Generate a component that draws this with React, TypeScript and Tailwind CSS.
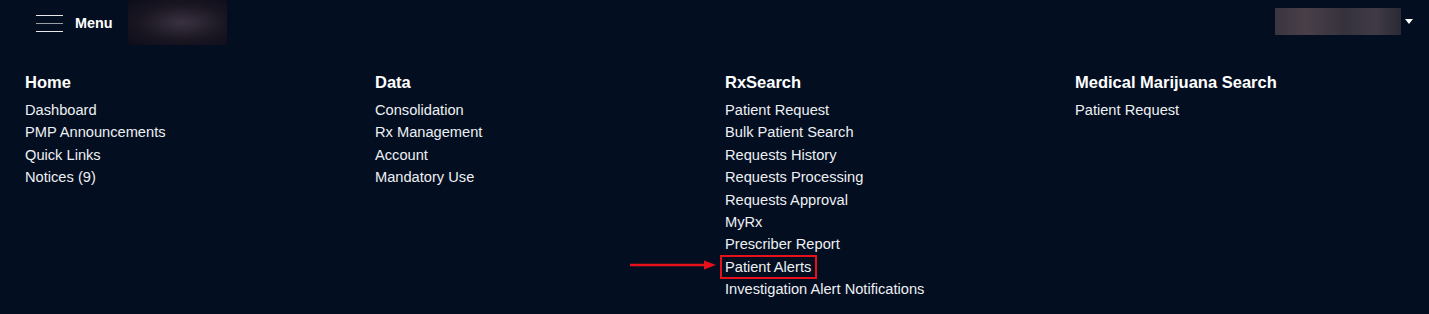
import React from 'react';

const columns: { title: string; links: string[] }[] = [
  { title: 'Home', links: ['Dashboard', 'PMP Announcements', 'Quick Links', 'Notices (9)'] },
  { title: 'Data', links: ['Consolidation', 'Rx Management', 'Account', 'Mandatory Use'] },
  {
    title: 'RxSearch',
    links: [
      'Patient Request',
      'Bulk Patient Search',
      'Requests History',
      'Requests Processing',
      'Requests Approval',
      'MyRx',
      'Prescriber Report',
      'Patient Alerts',
      'Investigation Alert Notifications',
    ],
  },
  { title: 'Medical Marijuana Search', links: ['Patient Request'] },
];

export default function App() {
  return (
    <div className="w-[1429px] h-[314px] overflow-hidden bg-[#030e21] text-white font-['Liberation_Sans',Arial,sans-serif]">
      {/* Top bar */}
      <div className="flex items-start justify-between h-[46px]">
        <div className="flex items-start">
          <button className="ml-[36px] mt-[15px] flex flex-col gap-[7px]">
            <span className="block w-[27px] h-[1px] bg-white/90"></span>
            <span className="block w-[27px] h-[1px] bg-white/60"></span>
            <span className="block w-[27px] h-[1px] bg-white/90"></span>
          </button>
          <span className="ml-[12px] mt-[14px] text-[14.4px] font-bold leading-[18px]">Menu</span>
          {/* blurred logo */}
          <div className="ml-[15px] w-[99px] h-[45px] bg-[radial-gradient(ellipse_at_55%_50%,#3a3140_0%,#1a1622_55%,#0c0d1a_100%)]"></div>
        </div>
        <div className="flex items-center mt-[8px] mr-[16px]">
          <div className="w-[126px] h-[27px] bg-[linear-gradient(90deg,#3a3540_0%,#4a3f48_25%,#35323d_55%,#403a45_80%,#2a2a35_100%)]"></div>
          <svg className="ml-[4px] w-[8px] h-[5px]" viewBox="0 0 8 5">
            <path d="M0 0h8L4 5z" fill="#ffffff" />
          </svg>
        </div>
      </div>

      {/* Mega menu */}
      <div className="grid grid-cols-[350px_350px_350px_350px] pl-[25px] pt-[26px]">
        {columns.map((col) => (
          <div key={col.title}>
            <h3 className="text-[16.5px] font-bold leading-[20px] mb-[7px]">{col.title}</h3>
            <ul>
              {col.links.map((l) => (
                <li key={l} className="text-[14.65px] leading-[22.4px] text-[#eef0f3]">
                  {l === 'Patient Alerts' ? (
                    <span className="relative">
                      <span className="absolute left-[-5px] right-[-6px] top-[-4px] bottom-[-4px] border-2 border-[#e8101a]"></span>
                      {l}
                      <svg className="absolute left-[-95px] top-[1px] w-[88px] h-[10px]" viewBox="0 0 88 10">
                        <line x1="0" y1="5" x2="76" y2="5" stroke="#e8101a" strokeWidth="2.5" />
                        <path d="M74 0.5L86 5L74 9.5z" fill="#e8101a" />
                      </svg>
                    </span>
                  ) : (
                    l
                  )}
                </li>
              ))}
            </ul>
          </div>
        ))}
      </div>
    </div>
  );
}
